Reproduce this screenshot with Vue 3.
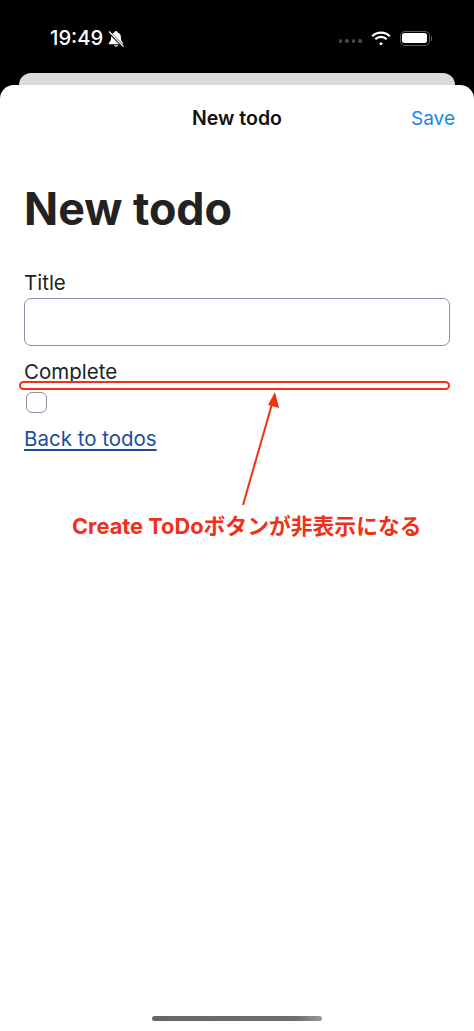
<template>
  <div class="screen">
    <div class="status-bar">
      <div class="status-left">
        <span class="time">19:49</span>
        <svg class="bell" width="18" height="18" viewBox="0 0 18 18">
          <path d="M9 1C8.200 1 7.600 1.600 7.600 2.300C5.400 2.900 4.100 4.900 4.100 7.300C4.100 10.200 3.300 11.500 1.900 13C1.500 13.500 1.800 14.200 2.500 14.200H15.500C16.200 14.200 16.500 13.500 16.100 13C14.700 11.500 13.900 10.200 13.900 7.300C13.900 4.900 12.600 2.900 10.400 2.300C10.400 1.600 9.800 1 9 1z" fill="#fff" />
          <path d="M7 15.200a2.100 2.100 0 0 0 4 0z" fill="#fff" />
          <path d="M2.300 2.500L17 17.200" stroke="#000" stroke-width="2.600" />
          <path d="M2 1.500L16.500 16.500" stroke="#fff" stroke-width="1.200" />
        </svg>
      </div>
      <div class="status-right">
        <div class="dots">
          <i></i><i></i><i></i><i></i>
        </div>
        <svg class="wifi" width="20" height="15" viewBox="0 0 20 15" fill="none" stroke="#fff" stroke-width="2.200">
          <path d="M1.200 5.200a12.500 12.500 0 0 1 17.600 0" />
          <path d="M4.300 8.300a8.100 8.100 0 0 1 11.400 0" />
          <path d="M10 14.600l-2-2.100a2.800 2.800 0 0 1 4 0z" fill="#fff" stroke="none" />
        </svg>
        <div class="battery">
          <div class="battery-fill"></div>
        </div>
        <div class="battery-cap"></div>
      </div>
    </div>

    <div class="back-sheet"></div>

    <div class="sheet">
      <div class="nav-bar">
        <span class="nav-title">New todo</span>
        <span class="nav-save">Save</span>
      </div>

      <div class="content">
        <h1 class="heading">New todo</h1>
        <label class="field-label">Title</label>
        <input class="text-input" type="text" />
        <label class="field-label complete-label">Complete</label>
        <input class="check" type="checkbox" />
        <a class="back-link" href="#">Back to todos</a>
      </div>

      <div class="home-indicator"></div>
    </div>

    <!-- annotation layer -->
    <div class="highlight"></div>
    <svg class="arrow" width="474" height="1031" viewBox="0 0 474 1031">
      <path d="M243 505L272 404" stroke="#f5300f" stroke-width="2" fill="none" />
      <path d="M275 392L268 405L279 408z" fill="#f5300f" />
    </svg>
    <div class="note">Create ToDoボタンが非表示になる</div>
  </div>
</template>

<script setup>
</script>

<style scoped>
.screen {
  position: relative;
  width: 474px;
  height: 1031px;
  overflow: hidden;
  background: #000;
  display: flex;
  flex-direction: column;
  font-family: Inter, "Noto Sans CJK JP", sans-serif;
}

.status-bar {
  height: 73px;
  flex: none;
  padding: 26px 42px 0 50px;
  box-sizing: border-box;
  display: flex;
  justify-content: space-between;
  align-items: flex-start;
  color: #fff;
}

.status-left {
  display: flex;
  align-items: center;
  gap: 4px;
  height: 24px;
}

.time {
  font-size: 20.200px;
  font-weight: 500;
  line-height: 24px;
}

.bell {
  margin-top: 1px;
}

.status-right {
  display: flex;
  align-items: center;
  height: 24px;
}

.dots {
  display: flex;
  gap: 3px;
  margin-top: 6px;
  margin-right: 9px;
}

.dots i {
  width: 3.500px;
  height: 3.500px;
  border-radius: 50%;
  background: #4a4a4a;
}

.wifi {
  margin-right: 9px;
}

.battery {
  width: 30px;
  height: 15px;
  box-sizing: border-box;
  border: 1.500px solid #5c5c5c;
  border-radius: 5px;
  padding: 1.500px;
}

.battery-fill {
  height: 100%;
  background: #fff;
  border-radius: 2.500px;
}

.battery-cap {
  width: 1.500px;
  height: 5px;
  margin-left: 1px;
  border-radius: 0 1px 1px 0;
  background: #5c5c5c;
}

.back-sheet {
  height: 24px;
  flex: none;
  margin: 0 19px -12px;
  background: #dcdcdc;
  border-radius: 12px 12px 0 0;
}

.sheet {
  position: relative;
  flex: 1;
  background: #fff;
  border-radius: 14px 14px 0 0;
  display: flex;
  flex-direction: column;
}

.nav-bar {
  height: 66px;
  flex: none;
  display: flex;
  align-items: center;
  justify-content: center;
  position: relative;
}

.nav-title {
  font-size: 19.500px;
  font-weight: 600;
  color: #111;
}

.nav-save {
  position: absolute;
  right: 19px;
  font-size: 19px;
  color: #1a84ee;
}

.content {
  padding: 0 24px;
  display: flex;
  flex-direction: column;
  align-items: flex-start;
}

.heading {
  margin: 28px 0 0;
  font-size: 44.800px;
  line-height: 60px;
  font-weight: 700;
  color: #222;
}

.field-label {
  margin-top: 31px;
  font-size: 20.500px;
  line-height: 26px;
  color: #222;
}

.text-input {
  width: 100%;
  height: 48px;
  margin: 2px 0 0;
  box-sizing: border-box;
  background: #fff;
  border: 1.500px solid #8c8ca8;
  border-radius: 7px;
  outline: none;
}

.complete-label {
  margin-top: 13px;
}

.check {
  appearance: none;
  width: 21px;
  height: 21px;
  margin: 7px 0 0 2px;
  box-sizing: border-box;
  background: #fff;
  border: 1.500px solid #8f8fa6;
  border-radius: 6px;
}

.back-link {
  margin-top: 12px;
  font-size: 20.500px;
  line-height: 28px;
  color: #1c4d9e;
  text-decoration: underline;
  text-decoration-thickness: 1.500px;
  text-underline-offset: 3px;
}

.home-indicator {
  position: absolute;
  left: 152px;
  bottom: 10px;
  width: 170px;
  height: 5px;
  border-radius: 3px;
  background: linear-gradient(90deg, #666, #6e6e6e 85%, #9a9a9a);
}

.highlight {
  position: absolute;
  left: 19px;
  top: 381px;
  width: 431px;
  height: 9px;
  box-sizing: border-box;
  border: 2px solid #f0301a;
  border-radius: 5px;
}

.arrow {
  position: absolute;
  left: 0;
  top: 0;
  pointer-events: none;
}

.note {
  position: absolute;
  left: 72px;
  top: 512px;
  font-size: 21.800px;
  line-height: 28px;
  font-weight: 700;
  color: #f0301a;
  white-space: nowrap;
}
</style>
